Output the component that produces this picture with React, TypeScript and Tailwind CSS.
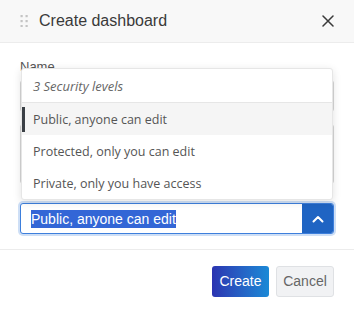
const DragHandle = () => (
  <svg width="8" height="12" viewBox="0 0 8 12" className="shrink-0">
    {[0, 5, 10].map((y) =>
      [0, 5].map((x) => <rect key={`${x}-${y}`} x={x + 0.5} y={y} width="2.2" height="2.2" fill="#c4c4c4" />)
    )}
  </svg>
);

const CloseIcon = () => (
  <svg width="12" height="12" viewBox="0 0 12 12">
    <path d="M1 1L11 11M11 1L1 11" stroke="#3a3a3a" strokeWidth="1.5" strokeLinecap="round" />
  </svg>
);

const ChevronUp = () => (
  <svg width="12" height="8" viewBox="0 0 12 8">
    <path d="M1.5 6.5L6 2L10.5 6.5" stroke="#ffffff" strokeWidth="2" fill="none" strokeLinecap="round" strokeLinejoin="round" />
  </svg>
);

const options = ['Public, anyone can edit', 'Protected, only you can edit', 'Private, only you have access'];

export default function App() {
  return (
    <div className="w-[354px] h-[309px] bg-white overflow-hidden font-['Liberation_Sans',Arial,sans-serif] text-[#333]">
      {/* Header */}
      <div className="h-[43px] flex items-center pl-[20px] pr-[20px] bg-[#f8f8f8] border-b border-[#ececec]">
        <DragHandle />
        <div className="ml-[11px] text-[16px] text-[#3a3a3a] leading-none">Create dashboard</div>
        <button className="ml-auto w-[12px] h-[12px] flex items-center justify-center">
          <CloseIcon />
        </button>
      </div>

      {/* Body */}
      <div className="relative px-[20px] pt-[15px] pb-[15px] border-b border-[#ececec]">
        <label className="block text-[13px] leading-[18px] text-[#555]">Name</label>
        <div className="mt-1 h-[32px] border border-[#d6d6d6] rounded-[3px]" />
        <div className="mt-3 h-[60px] border border-[#d6d6d6] rounded-[3px]" />

        {/* Select */}
        <div className="mt-[19px] h-[31px] flex rounded-[3px] border border-[#3d7fdc] shadow-[0_0_0_2px_rgba(61,127,220,0.25)] bg-white">
          <div className="flex-1 flex items-center pl-[10px]">
            <span className="bg-[#3366d6] text-white text-[14px] leading-[18px]">Public, anyone can edit</span>
          </div>
          <div className="w-[31px] bg-[#1f64c3] flex items-center justify-center rounded-r-[2px]">
            <ChevronUp />
          </div>
        </div>

        {/* Dropdown popup */}
        <div className="absolute left-[21px] top-[25px] w-[312px] bg-white rounded-[3px] border border-[#e6e6e6] shadow-[0_2px_8px_rgba(0,0,0,0.12)] font-['Open_Sans',sans-serif]">
          <div className="h-[34px] flex items-center pl-[11px] pt-[2px] italic text-[13px] text-[#666] border-b border-[#e6e6e6]">
            3 Security levels
          </div>
          {options.map((opt, i) => (
            <div
              key={opt}
              className={`relative h-[32px] flex items-center pl-[11px] pt-[3px] text-[12.5px] text-[#555] ${i === 0 ? 'bg-[#f5f5f5]' : ''}`}
            >
              {i === 0 && <div className="absolute left-0 top-[4px] bottom-[3px] w-[3px] bg-[#3a3f45]" />}
              {opt}
            </div>
          ))}
        </div>
      </div>

      {/* Footer */}
      <div className="flex justify-end gap-[7px] px-[20px] pt-[16px]">
        <button className="h-[31px] w-[57px] rounded-[3px] bg-gradient-to-r from-[#2b33b1] to-[#1a89d6] text-white text-[14px]">
          Create
        </button>
        <button className="h-[31px] w-[58px] rounded-[3px] bg-[#f1f2f4] border border-[#dfe1e4] text-[#666] text-[14px]">
          Cancel
        </button>
      </div>
    </div>
  );
}
